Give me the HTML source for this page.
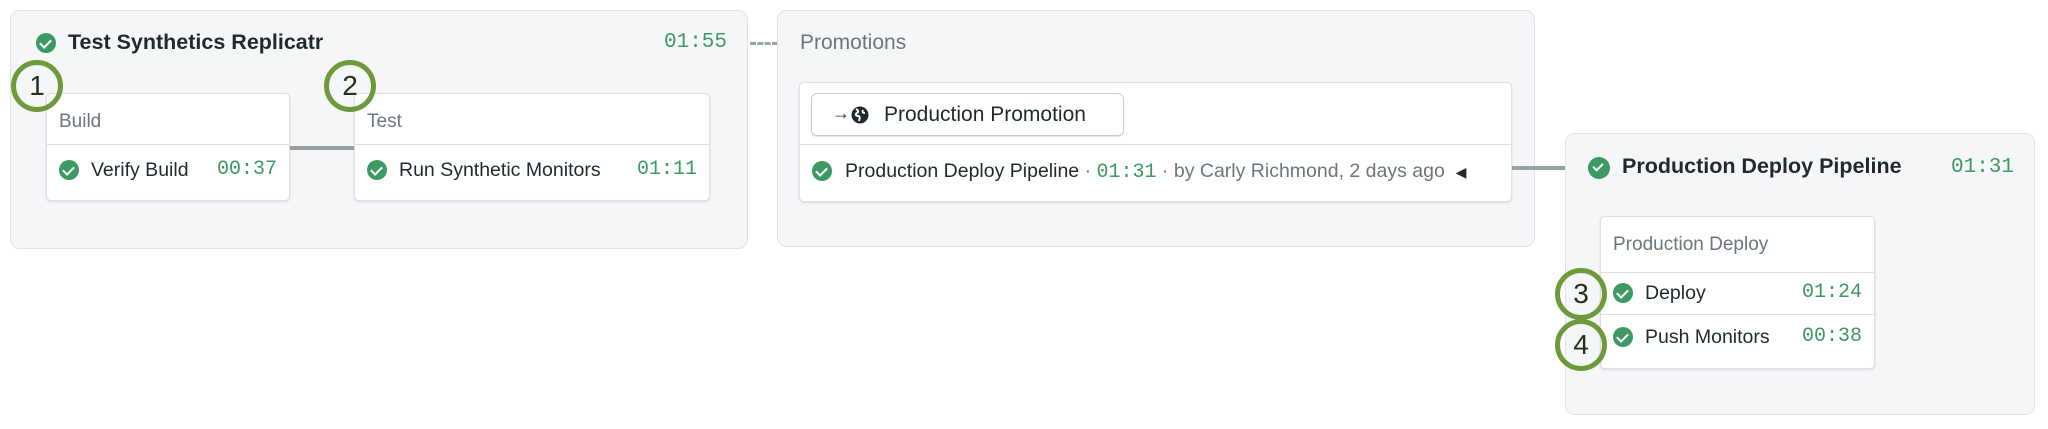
<!DOCTYPE html>
<html><head><style>
*{box-sizing:border-box;margin:0;padding:0}
body{width:2048px;height:429px;background:#fff;font-family:"Liberation Sans",sans-serif;color:#1f2a30;position:relative;overflow:hidden}
.abs{position:absolute}
.panel{position:absolute;background:#f5f6f8;border:1px solid #dfe2e6;border-radius:10px}
.card{position:absolute;background:#fff;border:1px solid #dcdfe3;border-radius:5px;box-shadow:0 1px 2px rgba(0,0,0,.12)}
.mono{font-family:"Liberation Mono",monospace;color:#3d9a62}
.chk{position:absolute;width:20px;height:20px;border-radius:50%;background:#3d9a62}
.chk:after{content:"";position:absolute;left:6px;top:4px;width:5px;height:9px;border:solid #fff;border-width:0 2.5px 2.5px 0;transform:rotate(45deg)}
.num{position:absolute;width:52px;height:52px;border:5px solid #6f9a3c;border-radius:50%;font-size:28px;text-align:center;line-height:42px;color:#253018;background:transparent}
.hdr{position:absolute;font-size:19px;color:#6b7780}
.txt{position:absolute;font-size:19.5px}
.div{position:absolute;left:0;right:0;height:1px;background:#dcdfe3}
</style></head><body>
<div class="panel" style="left:10px;top:10px;width:738px;height:239px"></div>
<div class="chk" style="left:36px;top:33px"></div>
<div class="abs" style="left:68px;top:30px;font-size:21.5px;font-weight:bold">Test Synthetics Replicatr</div>
<div class="abs mono" style="left:664px;top:31px;font-size:21px">01:55</div>

<div class="abs" style="left:290px;top:146px;width:64px;height:4px;background:#97a3a3"></div>
<div class="card" style="left:46px;top:93px;width:244px;height:108px">
 <div class="hdr" style="left:12px;top:17px">Build</div>
 <div class="div" style="top:50px"></div>
 <div class="chk" style="left:12px;top:66px"></div>
 <div class="txt" style="left:44px;top:65px">Verify Build</div>
 <div class="abs mono" style="left:170px;top:64px;font-size:20px">00:37</div>
</div>
<div class="card" style="left:354px;top:93px;width:356px;height:108px">
 <div class="hdr" style="left:12px;top:17px">Test</div>
 <div class="div" style="top:50px"></div>
 <div class="chk" style="left:12px;top:66px"></div>
 <div class="txt" style="left:44px;top:65px">Run Synthetic Monitors</div>
 <div class="abs mono" style="left:282px;top:64px;font-size:20px">01:11</div>
</div>
<div class="num" style="left:11px;top:60px">1</div>
<div class="num" style="left:324px;top:60px">2</div>

<div class="abs" style="left:750px;top:42px;width:28px;border-top:3px dashed #97a3a3"></div>

<div class="panel" style="left:777px;top:10px;width:758px;height:237px"></div>
<div class="abs" style="left:800px;top:31px;font-size:21px;color:#6b7780">Promotions</div>
<div class="card" style="left:799px;top:82px;width:713px;height:120px">
 <div class="abs" style="left:11px;top:10px;width:313px;height:43px;border:1px solid #c8ccd1;border-radius:6px;box-shadow:0 1px 1px rgba(0,0,0,.1)">
  <span class="abs" style="left:20px;top:9px;font-size:18px;font-weight:bold">&#8594;</span>
  <svg class="abs" style="left:39px;top:12px" width="18" height="18" viewBox="0 0 18 18"><circle cx="9" cy="9" r="8.5" fill="#1f2a30"/><path d="M5 3c2 1 3 3 1 4s-1 3 1 3 2 2 1 5M12 4c-1 2 0 3 2 3" stroke="#fff" stroke-width="2" fill="none"/></svg>
  <span class="abs" style="left:72px;top:9px;font-size:21px">Production Promotion</span>
 </div>
 <div class="div" style="top:61px"></div>
 <div class="chk" style="left:12px;top:78px"></div>
 <div class="txt" style="left:45px;top:77px;white-space:nowrap">Production Deploy Pipeline<span style="color:#6b7780"> · </span><span class="mono" style="font-size:20px">01:31</span><span style="color:#6b7780"> · by Carly Richmond, 2 days ago&nbsp;&nbsp;</span><span style="font-size:14px">◀</span></div>
</div>
<div class="abs" style="left:1512px;top:166px;width:54px;height:4px;background:#97a3a3"></div>

<div class="panel" style="left:1565px;top:133px;width:470px;height:282px"></div>
<div class="abs" style="left:1588px;top:157px;width:22px;height:22px;border-radius:50%;background:#3d9a62"></div>
<div class="abs" style="left:1595px;top:161px;width:6px;height:10px;border:solid #fff;border-width:0 2.5px 2.5px 0;transform:rotate(45deg)"></div>
<div class="abs" style="left:1622px;top:154px;font-size:21.5px;font-weight:bold">Production Deploy Pipeline</div>
<div class="abs mono" style="left:1951px;top:156px;font-size:21px">01:31</div>
<div class="card" style="left:1600px;top:216px;width:275px;height:153px">
 <div class="hdr" style="left:12px;top:17px">Production Deploy</div>
 <div class="div" style="top:55px"></div>
 <div class="chk" style="left:12px;top:66px"></div>
 <div class="txt" style="left:44px;top:65px">Deploy</div>
 <div class="abs mono" style="left:201px;top:64px;font-size:20px">01:24</div>
 <div class="div" style="top:97px"></div>
 <div class="chk" style="left:12px;top:110px"></div>
 <div class="txt" style="left:44px;top:109px">Push Monitors</div>
 <div class="abs mono" style="left:201px;top:108px;font-size:20px">00:38</div>
</div>
<div class="num" style="left:1555px;top:268px">3</div>
<div class="num" style="left:1555px;top:319px">4</div>
</body></html>
